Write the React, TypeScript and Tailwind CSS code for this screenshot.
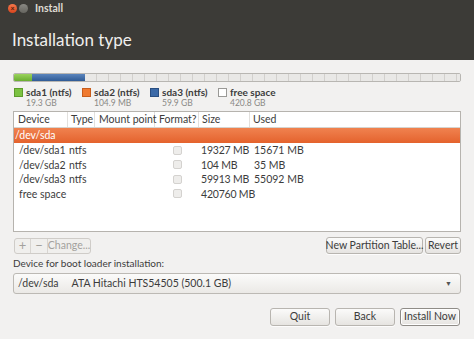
import React from 'react';

const font = { fontFamily: 'Lato, "Noto Sans", sans-serif' };

const rows = [
  { dev: '/dev/sda1', type: 'ntfs', size: '19327 MB', used: '15671 MB' },
  { dev: '/dev/sda2', type: 'ntfs', size: '104 MB', used: '35 MB' },
  { dev: '/dev/sda3', type: 'ntfs', size: '59913 MB', used: '55092 MB' },
  { dev: 'free space', type: '', size: '420760 MB', used: '' },
];

const legend = [
  { name: 'sda1 (ntfs)', size: '19.3 GB', color: 'bg-[#7cc242] border-[#5e9c2c]' },
  { name: 'sda2 (ntfs)', size: '104.9 MB', color: 'bg-[#f07a30] border-[#c85d1c]' },
  { name: 'sda3 (ntfs)', size: '59.9 GB', color: 'bg-[#3c6aa8] border-[#2a4f82]' },
  { name: 'free space', size: '420.8 GB', color: 'bg-white border-[#9a9996]' },
];

function Btn({ children, w, h = 'h-[18px]' }: { children: React.ReactNode; w: string; h?: string }) {
  return (
    <div
      className={`${w} ${h} flex items-center justify-center rounded-[3px] border border-[#b8b5b0] bg-gradient-to-b from-[#fbfbfa] to-[#e6e4e1] text-[10.5px] text-[#3c3c3c] shadow-[0_1px_0_rgba(255,255,255,0.8)]`}
    >
      {children}
    </div>
  );
}

export default function App() {
  return (
    <div className="w-[474px] h-[339px] bg-[#f2f1f0] flex flex-col overflow-hidden whitespace-nowrap" style={font}>
      <header className="h-[60px] bg-[#3c3b37] flex flex-col">
        <div className="h-[17px] flex items-center pl-[8px]">
          <div className="w-[9px] h-[9px] rounded-full bg-gradient-to-b from-[#f5774a] to-[#d8441c] flex items-center justify-center text-[7px] leading-none text-[#4a1c0c] font-bold">
            ×
          </div>
          <div className="ml-[2px] w-[9px] h-[9px] rounded-full bg-gradient-to-b from-[#8a8984] to-[#66655f]" />
          <span className="ml-[7px] text-[10.5px] font-bold text-[#dfdbd2]">Install</span>
        </div>
        <div className="pl-[12px] pt-[12px] text-[17px] leading-[22px] text-[#f0efed]">Installation type</div>
      </header>

      <main className="flex-1 px-[13px] flex flex-col">
        <div className="mt-[13px] h-[9px] flex rounded-[2px] overflow-hidden border border-[#b8b6b2]">
          <div className="w-[18px] bg-gradient-to-b from-[#9bd35c] to-[#6aae30]" />
          <div className="w-[53px] bg-gradient-to-b from-[#5b85bd] to-[#2f5b96]" />
          <div className="flex-1 bg-[repeating-linear-gradient(90deg,#e9e8e6_0px,#e9e8e6_11px,#d2d0cd_11px,#d2d0cd_12px)]" />
        </div>

        <div className="mt-[4px] pl-[1px] flex">
          {legend.map((l) => (
            <div key={l.name} className="w-[68px] flex">
              <div className={`mt-[2px] w-[9px] h-[9px] border ${l.color}`} />
              <div className="ml-[3px] flex flex-col">
                <span className="text-[10px] leading-[12px] font-bold text-[#3c3c3c]">{l.name}</span>
                <span className="text-[8.5px] leading-[10px] text-[#8a8986]">{l.size}</span>
              </div>
            </div>
          ))}
        </div>

        <div className="mt-[3px] h-[121px] border border-[#b6b3ae] bg-white text-[10.5px] text-[#3c3c3c]">
          <div className="h-[16px] flex border-b border-[#d6d4d0] leading-[15px]">
            <div className="w-[54px] pl-[4px] border-r border-[#e2e0dd]">Device</div>
            <div className="w-[27px] pl-[3px] border-r border-[#e2e0dd]">Type</div>
            <div className="w-[60px] pl-[4px] border-r border-[#e2e0dd]">Mount point</div>
            <div className="w-[44px] pl-[4px] border-r border-[#e2e0dd]">Format?</div>
            <div className="w-[51px] pl-[3px] border-r border-[#e2e0dd]">Size</div>
            <div className="flex-1 pl-[3px]">Used</div>
          </div>
          <div className="h-[15px] leading-[15px] pl-[1px] bg-gradient-to-b from-[#f0824f] to-[#e4622c] text-white">/dev/sda</div>
          {rows.map((r) => (
            <div key={r.dev} className="h-[14.5px] flex items-center leading-[14px]">
              <div className="w-[54px] pl-[5px]">{r.dev}</div>
              <div className="w-[27px] pl-[1px]">{r.type}</div>
              <div className="w-[60px]" />
              <div className="w-[44px] pl-[18px]">
                <div className="w-[9px] h-[9px] rounded-[2px] border border-[#d4d2cf] bg-[#eeedeb]" />
              </div>
              <div className="w-[51px] pl-[2px] tracking-[-0.2px]">{r.size}</div>
              <div className="flex-1 pl-[4px]">{r.used}</div>
            </div>
          ))}
        </div>

        <div className="mt-[5px] h-[17px] flex items-center">
          <div className="ml-[1px] h-[16px] flex rounded-[3px] border border-[#cfccc8] bg-[#f0efed] text-[10.5px] text-[#a3a19d]">
            <div className="w-[16px] flex items-center justify-center border-r border-[#d8d5d1] text-[13px]">+</div>
            <div className="w-[17px] flex items-center justify-center border-r border-[#d8d5d1] text-[13px]">−</div>
            <div className="w-[42px] flex items-center justify-center">Change...</div>
          </div>
          <div className="ml-auto flex gap-[2px]">
            <Btn w="w-[97px]" h="h-[17px]">New Partition Table...</Btn>
            <Btn w="w-[36px]" h="h-[17px]">Revert</Btn>
          </div>
        </div>

        <div className="mt-[3px] text-[10px] leading-[13px] text-[#3c3c3c]">Device for boot loader installation:</div>

        <div className="mt-[3px] h-[21px] flex items-center rounded-[3px] border border-[#bcb9b4] bg-gradient-to-b from-[#fbfbfa] to-[#ebe9e6] text-[10.5px] text-[#3c3c3c]">
          <span className="pl-[4px]">/dev/sda</span>
          <span className="pl-[13px]">ATA Hitachi HTS54505 (500.1 GB)</span>
          <span className="ml-auto mr-[8px] text-[7px] text-[#555]">▼</span>
        </div>

        <div className="mt-[14px] flex justify-end gap-[5px] pr-[1px]">
          <Btn w="w-[60px]">Quit</Btn>
          <Btn w="w-[60px]">Back</Btn>
          <div className="w-[60px] h-[18px] flex items-center justify-center rounded-[3px] border border-[#8f8c87] bg-gradient-to-b from-[#fbfbfa] to-[#e6e4e1] text-[10.5px] text-[#3c3c3c] shadow-[inset_0_0_0_1px_#ffffff]">
            Install Now
          </div>
        </div>
      </main>
    </div>
  );
}
